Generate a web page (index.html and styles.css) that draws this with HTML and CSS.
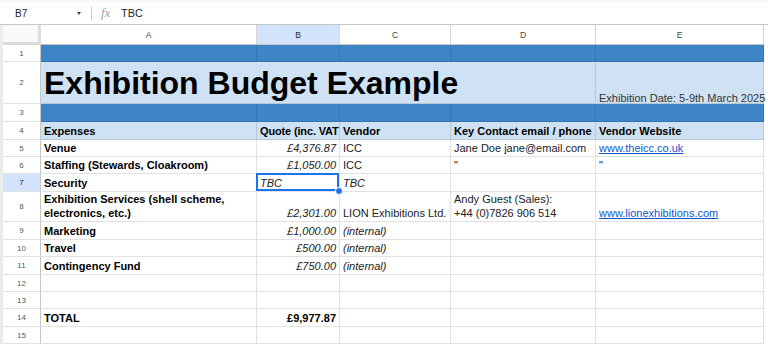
FILE: index.html
```html
<!DOCTYPE html>
<html lang="en">
<head>
    <meta charset="UTF-8">
    <title>Exhibition Budget Example</title>
    <link rel="stylesheet" href="styles.css">
</head>
<body>
    <div class="formula-bar">
        <div class="name-box">B7<span class="caret"></span></div>
        <div class="bar-sep"></div>
        <div class="fx">fx</div>
        <div class="formula">TBC</div>
    </div>

    <div class="sheet">
        <div class="corner"></div>
        <div class="col-head">A</div>
        <div class="col-head active">B</div>
        <div class="col-head">C</div>
        <div class="col-head">D</div>
        <div class="col-head">E</div>

        <!-- row 1 -->
        <div class="row-head">1</div>
        <div class="cell dark"></div>
        <div class="cell dark"></div>
        <div class="cell dark"></div>
        <div class="cell dark"></div>
        <div class="cell dark"></div>

        <!-- row 2 -->
        <div class="row-head">2</div>
        <div class="cell light title">Exhibition Budget Example</div>
        <div class="cell light date">Exhibition Date: 5-9th March 2025</div>

        <!-- row 3 -->
        <div class="row-head">3</div>
        <div class="cell dark"></div>
        <div class="cell dark"></div>
        <div class="cell dark"></div>
        <div class="cell dark"></div>
        <div class="cell dark"></div>

        <!-- row 4 -->
        <div class="row-head">4</div>
        <div class="cell light b">Expenses</div>
        <div class="cell light b tight">Quote (inc. VAT</div>
        <div class="cell light b">Vendor</div>
        <div class="cell light b">Key Contact email / phone</div>
        <div class="cell light b">Vendor Website</div>

        <!-- row 5 -->
        <div class="row-head">5</div>
        <div class="cell b">Venue</div>
        <div class="cell num">£4,376.87</div>
        <div class="cell">ICC</div>
        <div class="cell">Jane Doe jane@email.com</div>
        <div class="cell"><a href="#">www.theicc.co.uk</a></div>

        <!-- row 6 -->
        <div class="row-head">6</div>
        <div class="cell b">Staffing (Stewards, Cloakroom)</div>
        <div class="cell num">£1,050.00</div>
        <div class="cell">ICC</div>
        <div class="cell">"</div>
        <div class="cell">"</div>

        <!-- row 7 -->
        <div class="row-head active">7</div>
        <div class="cell b">Security</div>
        <div class="cell it selected">TBC</div>
        <div class="cell it">TBC</div>
        <div class="cell"></div>
        <div class="cell"></div>

        <!-- row 8 -->
        <div class="row-head">8</div>
        <div class="cell b"><span>Exhibition Services (shell scheme,<br>electronics, etc.)</span></div>
        <div class="cell num">£2,301.00</div>
        <div class="cell">LION Exhibitions Ltd.</div>
        <div class="cell"><span>Andy Guest (Sales):<br>+44 (0)7826 906 514</span></div>
        <div class="cell"><a href="#">www.lionexhibitions.com</a></div>

        <!-- row 9 -->
        <div class="row-head">9</div>
        <div class="cell b">Marketing</div>
        <div class="cell num">£1,000.00</div>
        <div class="cell it">(internal)</div>
        <div class="cell"></div>
        <div class="cell"></div>

        <!-- row 10 -->
        <div class="row-head">10</div>
        <div class="cell b">Travel</div>
        <div class="cell num">£500.00</div>
        <div class="cell it">(internal)</div>
        <div class="cell"></div>
        <div class="cell"></div>

        <!-- row 11 -->
        <div class="row-head">11</div>
        <div class="cell b">Contingency Fund</div>
        <div class="cell num">£750.00</div>
        <div class="cell it">(internal)</div>
        <div class="cell"></div>
        <div class="cell"></div>

        <!-- row 12 -->
        <div class="row-head">12</div>
        <div class="cell"></div>
        <div class="cell"></div>
        <div class="cell"></div>
        <div class="cell"></div>
        <div class="cell"></div>

        <!-- row 13 -->
        <div class="row-head">13</div>
        <div class="cell"></div>
        <div class="cell"></div>
        <div class="cell"></div>
        <div class="cell"></div>
        <div class="cell"></div>

        <!-- row 14 -->
        <div class="row-head">14</div>
        <div class="cell b">TOTAL</div>
        <div class="cell num total">£9,977.87</div>
        <div class="cell"></div>
        <div class="cell"></div>
        <div class="cell"></div>

        <!-- row 15 -->
        <div class="row-head">15</div>
        <div class="cell"></div>
        <div class="cell"></div>
        <div class="cell"></div>
        <div class="cell"></div>
        <div class="cell"></div>
    </div>
</body>
</html>
```

FILE: styles.css
```css
        body {
            margin: 0;
            width: 768px;
            height: 345px;
            overflow: hidden;
            background: #fff;
            font-family: 'Liberation Sans', Arial, sans-serif;
            color: #222;
        }

        /* top bar with the cell name and formula */
        .formula-bar {
            display: flex;
            align-items: center;
            height: 22px;
            border-top: 2px solid #f6f8fb;
            border-bottom: 1px solid #c7c7c7;
            font-size: 10px;
            color: #1f1f1f;
        }

        .name-box {
            display: flex;
            align-items: center;
            box-sizing: border-box;
            width: 91px;
            padding-left: 15px;
            padding-right: 10px;
        }

        .caret {
            margin-left: auto;
            width: 0;
            height: 0;
            border-left: 2.5px solid transparent;
            border-right: 2.5px solid transparent;
            border-top: 3px solid #444;
        }

        .bar-sep {
            width: 1px;
            height: 14px;
            background: #c7c7c7;
        }

        .fx {
            margin-left: 9px;
            width: 12px;
            font-family: 'Liberation Serif', serif;
            font-style: italic;
            font-size: 13px;
            color: #9aa0a6;
        }

        .formula {
            margin-left: 8px;
            font-size: 11px;
        }

        /* the grid itself */
        .sheet {
            display: grid;
            grid-template-columns: 38px 216px 83px 111px 145px 168px;
            grid-template-rows: 20px 17px 42px 18px 18px 17px 17px 18px 30px 18px 17px 18px 17px 17px 18px 17px;
            border-left: 3px solid #ececec;
            width: 761px;
        }

        .corner {
            background: #f8f9fa;
            border-right: 3px solid #dadce0;
            border-bottom: 3px solid #dadce0;
        }

        .col-head {
            display: flex;
            align-items: center;
            justify-content: center;
            border-right: 1px solid #d7d7d7;
            border-bottom: 1px solid #c4c7c5;
            font-size: 8.5px;
            color: #444;
        }

        .row-head {
            display: flex;
            align-items: center;
            justify-content: center;
            border-right: 1px solid #c4c7c5;
            border-bottom: 1px solid #e1e1e1;
            font-size: 8px;
            color: #555;
        }

        .col-head.active,
        .row-head.active {
            background: #d3e3fd;
            color: #1f1f1f;
        }

        .cell {
            display: flex;
            align-items: flex-end;
            min-width: 0;
            padding: 0 3px 1px;
            border-right: 1px solid rgba(0, 0, 0, 0.115);
            border-bottom: 1px solid rgba(0, 0, 0, 0.115);
            font-size: 11px;
            line-height: 14px;
            white-space: nowrap;
            overflow: hidden;
        }

        .dark {
            background: #3d85c6;
        }

        .light {
            background: #cfe2f3;
        }

        .title {
            grid-column: span 4;
            overflow: visible;
            font-size: 32px;
            line-height: 37px;
            font-weight: bold;
            color: #000;
        }

        .date {
            overflow: visible;
            padding-bottom: 0;
            line-height: 10px;
            color: #333;
        }

        /* header text that runs right up to the next column */
        .tight {
            padding-right: 0;
            letter-spacing: -0.15px;
        }

        .b {
            font-weight: bold;
            color: #000;
        }

        .it {
            font-style: italic;
        }

        .num {
            justify-content: flex-end;
            font-style: italic;
        }

        .num.total {
            font-style: normal;
            font-weight: bold;
            color: #000;
        }

        .cell a {
            color: #1155cc;
            text-decoration: underline;
        }

        /* active cell outline and fill handle */
        .selected {
            position: relative;
            z-index: 2;
            overflow: visible;
        }

        .selected::before {
            content: '';
            position: absolute;
            top: -1px;
            left: -1px;
            right: 0;
            bottom: 0;
            border: 2px solid #1a73e8;
        }

        .selected::after {
            content: '';
            position: absolute;
            right: -4px;
            bottom: -4px;
            width: 6px;
            height: 6px;
            border-radius: 50%;
            background: #1a73e8;
            border: 1px solid #fff;
        }
```
